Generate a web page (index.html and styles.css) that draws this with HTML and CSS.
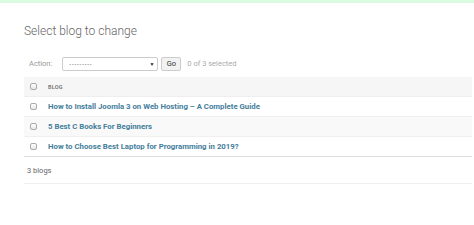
FILE: index.html
```html
<!DOCTYPE html>
<html>
<head>
<meta charset="utf-8">
<link rel="stylesheet" href="styles.css">
</head>
<body>
<div class="msgbar"></div>
<div class="content">
  <h1 class="title">Select blog to change</h1>
  <div class="actions">
    <span class="label">Action:</span>
    <div class="select"><span class="dashes">---------</span><span class="arrow">▼</span></div>
    <div class="go">Go</div>
    <span class="count">0 of 3 selected</span>
  </div>
  <div class="table">
    <div class="row head"><span class="cb"></span><span class="col">BLOG</span></div>
    <div class="row"><span class="cb"></span><a class="link">How to Install Joomla 3 on Web Hosting – A Complete Guide</a></div>
    <div class="row alt"><span class="cb"></span><a class="link">5 Best C Books For Beginners</a></div>
    <div class="row last"><span class="cb"></span><a class="link">How to Choose Best Laptop for Programming in 2019?</a></div>
  </div>
  <div class="footer">3 blogs</div>
</div>
</body>
</html>
```
FILE: styles.css
```css
html, body { margin: 0; padding: 0; background: #fff; }
body { font-family: Roboto, "Liberation Sans", sans-serif; width: 474px; height: 225px; overflow: hidden; -webkit-font-smoothing: antialiased; }
.msgbar { height: 3px; background: #dafbe1; }
.content { padding: 18px 2px 0 24px; }
.title { margin: 0; font-size: 12px; font-weight: 300; color: #666; line-height: 20px; }
.actions { display: flex; align-items: center; height: 15px; margin-top: 15px; padding-left: 5px; font-size: 7.5px; color: #999; }
.label { margin-right: 10px; color: #999; }
.select { height: 14px; border: 1px solid #ccc; border-radius: 2px; display: flex; align-items: center; justify-content: space-between; padding: 0 3px 0 6px; box-sizing: border-box; width: 96px; }
.dashes { color: #444; font-size: 6px; letter-spacing: 0.9px; }
.arrow { color: #222; font-size: 5px; }
.go { margin-left: 3px; height: 14px; width: 20px; border: 1px solid #ccc; border-radius: 2px; background: #f2f2f2; box-sizing: border-box; display: flex; align-items: center; justify-content: center; color: #333; font-size: 7.5px; }
.count { margin-left: 6px; color: #aaa; }
.table { margin-top: 6px; }
.row { height: 20px; display: flex; align-items: center; border-bottom: 1px solid #f0f0f0; box-sizing: border-box; }
.row.head { background: #f6f6f6; border-bottom: 1px solid #eee; }
.row.alt { background: #f9f9f9; }
.row.last { border-bottom: 1px solid #ddd; }
.cb { width: 7px; height: 7px; border: 1px solid #aaa; border-radius: 2px; background: linear-gradient(#fff, #e6e6e6); margin-left: 6px; margin-right: 11px; box-sizing: border-box; }
.col { font-size: 5.5px; color: #666; font-weight: 500; letter-spacing: 0.2px; }
.link { font-size: 7.8px; font-weight: 700; color: #447e9b; text-decoration: none; }
.footer { height: 26px; display: flex; align-items: center; padding-left: 3px; font-size: 7.5px; color: #666; border-bottom: 1px solid #eee; }
```
